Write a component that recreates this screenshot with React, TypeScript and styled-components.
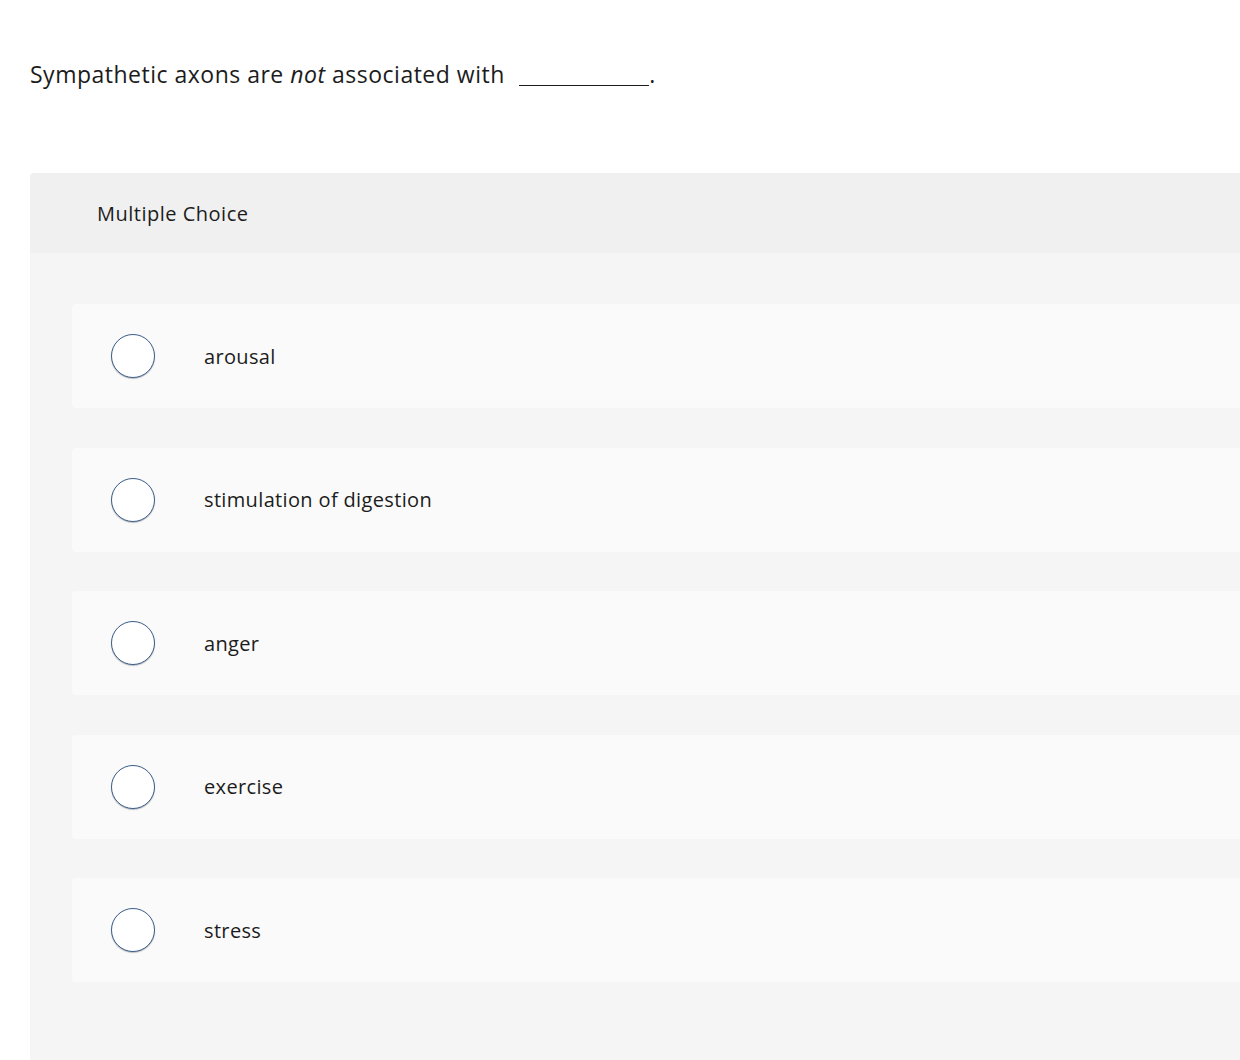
import * as React from 'react';
import styled, { createGlobalStyle } from 'styled-components';

const GlobalStyle = createGlobalStyle`
  html, body {
    margin: 0;
    padding: 0;
    background: #fff;
    overflow: hidden;
  }
  body {
    font-family: "Open Sans", Lato, "Liberation Sans", sans-serif;
    color: #1c1c1c;
  }
`;

const Page = styled.div`
  width: 1240px;
  height: 1060px;
  overflow: hidden;
  padding: 0 0 0 30px;
  box-sizing: border-box;
`;

const Question = styled.p`
  margin: 0;
  padding-top: 58px;
  height: 173px;
  box-sizing: border-box;
  font-size: 23px;
  line-height: 32px;
  letter-spacing: 0.5px;
  color: #1c1c1c;

  em {
    font-style: italic;
  }
`;

const Blank = styled.span`
  display: inline-block;
  width: 130px;
  margin-left: 8px;
  border-bottom: 1.5px solid #1c1c1c;
  vertical-align: -3px;
  height: 0;
`;

const Panel = styled.section`
  width: 1240px;
  height: 900px;
  background: #f5f5f5;
  border-radius: 4px 0 0 0;
  overflow: hidden;
`;

const PanelHeader = styled.div`
  height: 80px;
  background: #f0f0f0;
  display: flex;
  align-items: center;
  padding-left: 67px;
  font-size: 20px;
  letter-spacing: 0.5px;
  color: #1c1c1c;
`;

const ChoiceList = styled.div`
  display: flex;
  flex-direction: column;
  gap: 39.5px;
  padding: 51px 0 0 42px;
`;

const Choice = styled.label`
  height: 104px;
  background: #fafafa;
  border-radius: 4px 0 0 4px;
  display: flex;
  align-items: center;
  cursor: pointer;
`;

const Radio = styled.span`
  width: 42px;
  height: 42px;
  margin-left: 39px;
  border-radius: 50%;
  border: 1.5px solid #3a5d8a;
  background: #fff;
  box-shadow: 0 1px 1px rgba(0, 0, 0, 0.25);
  flex-shrink: 0;
`;

const ChoiceText = styled.span`
  margin-left: 49px;
  font-size: 20px;
  letter-spacing: 0.35px;
  color: #1c1c1c;
`;

const choices = ['arousal', 'stimulation of digestion', 'anger', 'exercise', 'stress'];

export default function App() {
  return (
    <Page>
      <GlobalStyle />
      <Question>
        Sympathetic axons are <em>not</em> associated with <Blank />.
      </Question>
      <Panel>
        <PanelHeader>Multiple Choice</PanelHeader>
        <ChoiceList>
          {choices.map((c) => (
            <Choice key={c}>
              <Radio />
              <ChoiceText>{c}</ChoiceText>
            </Choice>
          ))}
        </ChoiceList>
      </Panel>
    </Page>
  );
}
